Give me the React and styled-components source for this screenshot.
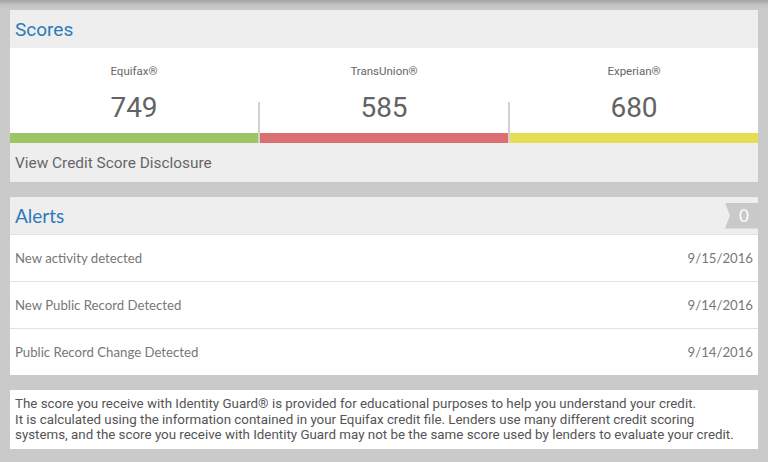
import React from "react";
import styled, { createGlobalStyle } from "styled-components";

const Global = createGlobalStyle`
  html, body { margin: 0; padding: 0; }
  body {
    width: 768px;
    height: 462px;
    overflow: hidden;
    background: linear-gradient(to bottom, #a4a4a4 0px, #c2c2c2 5px, #cacaca 9px, #cacaca 100%);
    font-family: Roboto, "Liberation Sans", sans-serif;
  }
`;

const Page = styled.div`
  display: flex;
  flex-direction: column;
  gap: 15px;
  padding: 10px 10px 0 10px;
`;

const Panel = styled.section`
  background: #eeeeee;
  display: flex;
  flex-direction: column;
`;

const PanelHeader = styled.header`
  height: ${(p) => p.$h}px;
  display: flex;
  align-items: center;
  justify-content: space-between;
  padding-left: 5px;
  box-sizing: border-box;
`;

const Title = styled.h2`
  margin: 0;
  font-weight: 400;
  font-size: ${(p) => p.$size}px;
  color: #2c7bb9;
  font-family: ${(p) => (p.$lato ? "Lato, 'Liberation Sans', sans-serif" : "Roboto, 'Liberation Sans', sans-serif")};
`;

const ScoreGrid = styled.div`
  background: #ffffff;
  display: grid;
  grid-template-columns: 1fr 2px 1fr 2px 1fr;
  height: 95px;
`;

const ScoreCol = styled.div`
  display: flex;
  flex-direction: column;
  align-items: center;
`;

const Bureau = styled.div`
  margin-top: 17px;
  font-size: 11.5px;
  line-height: 13px;
  color: #666;
`;

const ScoreValue = styled.div`
  margin-top: 13px;
  font-size: 28px;
  line-height: 34px;
  color: #636363;
`;

const Bar = styled.div`
  margin-top: auto;
  align-self: stretch;
  height: 10px;
  background: ${(p) => p.$color};
`;

const Divider = styled.div`
  align-self: end;
  height: 41px;
  background: #d2d2d2;
`;

const Disclosure = styled.div`
  height: 39px;
  display: flex;
  align-items: center;
  padding-left: 5px;
  font-size: 15.4px;
  color: #666;
`;

const Badge = styled.div`
  width: 33px;
  height: 26px;
  background: #c9c9c9;
  clip-path: polygon(0 0, 100% 0, 100% 100%, 0 100%, 5px 50%);
  display: flex;
  align-items: center;
  justify-content: center;
  padding-left: 5px;
  box-sizing: border-box;
  color: #ffffff;
  font-family: Lato, "Liberation Sans", sans-serif;
  font-size: 17px;
`;

const AlertRow = styled.div`
  height: 47px;
  box-sizing: border-box;
  background: #ffffff;
  border-top: 1px solid #e2e2e2;
  display: flex;
  align-items: center;
  justify-content: space-between;
  padding: 0 5px;
  font-family: Lato, "Liberation Sans", sans-serif;
  font-size: 13.2px;
  color: #777;
`;

const Note = styled.p`
  margin: 0;
  background: #ffffff;
  padding: 6px 5px 6px 5px;
  font-size: 13.35px;
  line-height: 15.5px;
  color: #555;
`;

const scores = [
  { name: "Equifax®", value: 749, color: "#9dc563" },
  { name: "TransUnion®", value: 585, color: "#db6e70" },
  { name: "Experian®", value: 680, color: "#e6dd57" },
];

const alerts = [
  { text: "New activity detected", date: "9/15/2016" },
  { text: "New Public Record Detected", date: "9/14/2016" },
  { text: "Public Record Change Detected", date: "9/14/2016" },
];

export default function App() {
  return (
    <>
      <Global />
      <Page>
        <Panel>
          <PanelHeader $h={38}>
            <Title $size={19}>Scores</Title>
          </PanelHeader>
          <ScoreGrid>
            {scores.map((s, i) => (
              <React.Fragment key={s.name}>
                {i > 0 && <Divider />}
                <ScoreCol>
                  <Bureau>{s.name}</Bureau>
                  <ScoreValue>{s.value}</ScoreValue>
                  <Bar $color={s.color} />
                </ScoreCol>
              </React.Fragment>
            ))}
          </ScoreGrid>
          <Disclosure>View Credit Score Disclosure</Disclosure>
        </Panel>

        <Panel>
          <PanelHeader $h={37}>
            <Title $size={19} $lato>Alerts</Title>
            <Badge>0</Badge>
          </PanelHeader>
          {alerts.map((a) => (
            <AlertRow key={a.text}>
              <span>{a.text}</span>
              <span>{a.date}</span>
            </AlertRow>
          ))}
        </Panel>

        <Note>
          The score you receive with Identity Guard® is provided for educational purposes to help you understand your credit.
          <br />
          It is calculated using the information contained in your Equifax credit file. Lenders use many different credit scoring
          <br />
          systems, and the score you receive with Identity Guard may not be the same score used by lenders to evaluate your credit.
        </Note>
      </Page>
    </>
  );
}
